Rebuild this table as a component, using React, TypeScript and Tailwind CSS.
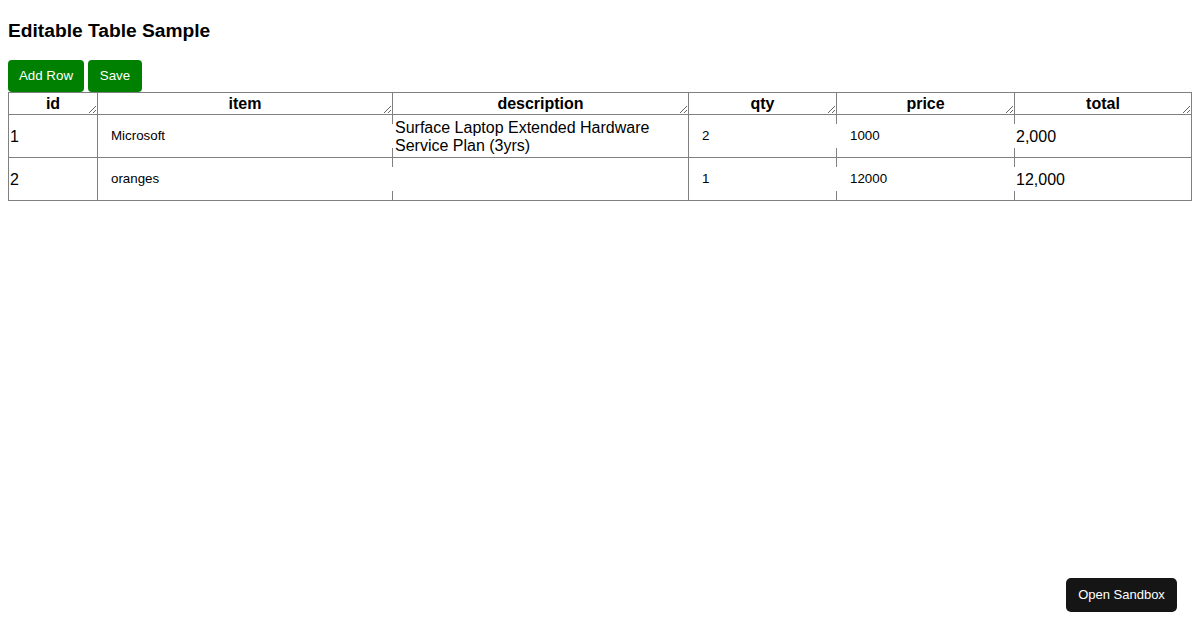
import React from "react";

const font = { fontFamily: '"Liberation Sans", Arial, sans-serif' };

const headers = ["id", "item", "description", "qty", "price", "total"];

const rows = [
  { id: "1", item: "Microsoft", description: "Surface Laptop Extended Hardware Service Plan (3yrs)", qty: "2", price: "1000", total: "2,000" },
  { id: "2", item: "oranges", description: "", qty: "1", price: "12000", total: "12,000" },
];

function InputCell({ value }: { value: string }) {
  return (
    <div className="flex items-center border-r border-b border-[#808080] h-[43px]">
      <div className="shrink-0 w-[calc(100%+2px)] h-[24px] bg-white pl-[13px] flex items-center text-[13.33px] text-black whitespace-nowrap">
        {value}
      </div>
    </div>
  );
}

export default function App() {
  return (
    <div className="min-h-[630px] bg-white text-black px-2 relative" style={font}>
      <h3 className="pt-[20px] text-[19.2px] leading-[21px] font-bold">Editable Table Sample</h3>
      <div className="flex gap-[4px] mt-[19px]">
        <button className="w-[76px] h-[32px] bg-[#008000] text-white text-[13.33px] rounded-[4px]">Add Row</button>
        <button className="w-[54px] h-[32px] bg-[#008000] text-white text-[13.33px] rounded-[4px]">Save</button>
      </div>
      <div className="grid grid-cols-[89px_295px_296px_148px_178px_177px] border-l border-t border-[#808080] w-[1184px]">
        {headers.map((h) => (
          <div key={h} className="border-r border-b border-[#808080] h-[22px]">
            <div className="resize-x overflow-hidden h-[21px] w-full text-center font-bold text-[16px] leading-[21px]">
              {h}
            </div>
          </div>
        ))}
        {rows.map((r) => (
          <React.Fragment key={r.id}>
            <div className="flex items-center border-r border-b border-[#808080] h-[43px] pl-[1px] pt-[2px] text-[16px]">{r.id}</div>
            <InputCell value={r.item} />
            <div className="border-r border-b border-[#808080] h-[43px] pt-[4px] pl-[2px] pr-[2px] text-[16px] leading-[18.4px]">
              {r.description}
            </div>
            <InputCell value={r.qty} />
            <InputCell value={r.price} />
            <div className="flex items-center border-r border-b border-[#808080] h-[43px] pl-[1px] pt-[2px] text-[16px]">{r.total}</div>
          </React.Fragment>
        ))}
      </div>
      <button
        className="fixed right-[23px] bottom-[18px] w-[111px] h-[34px] bg-[#151515] text-white text-[13px] rounded-[5px]"
      >
        Open Sandbox
      </button>
    </div>
  );
}
